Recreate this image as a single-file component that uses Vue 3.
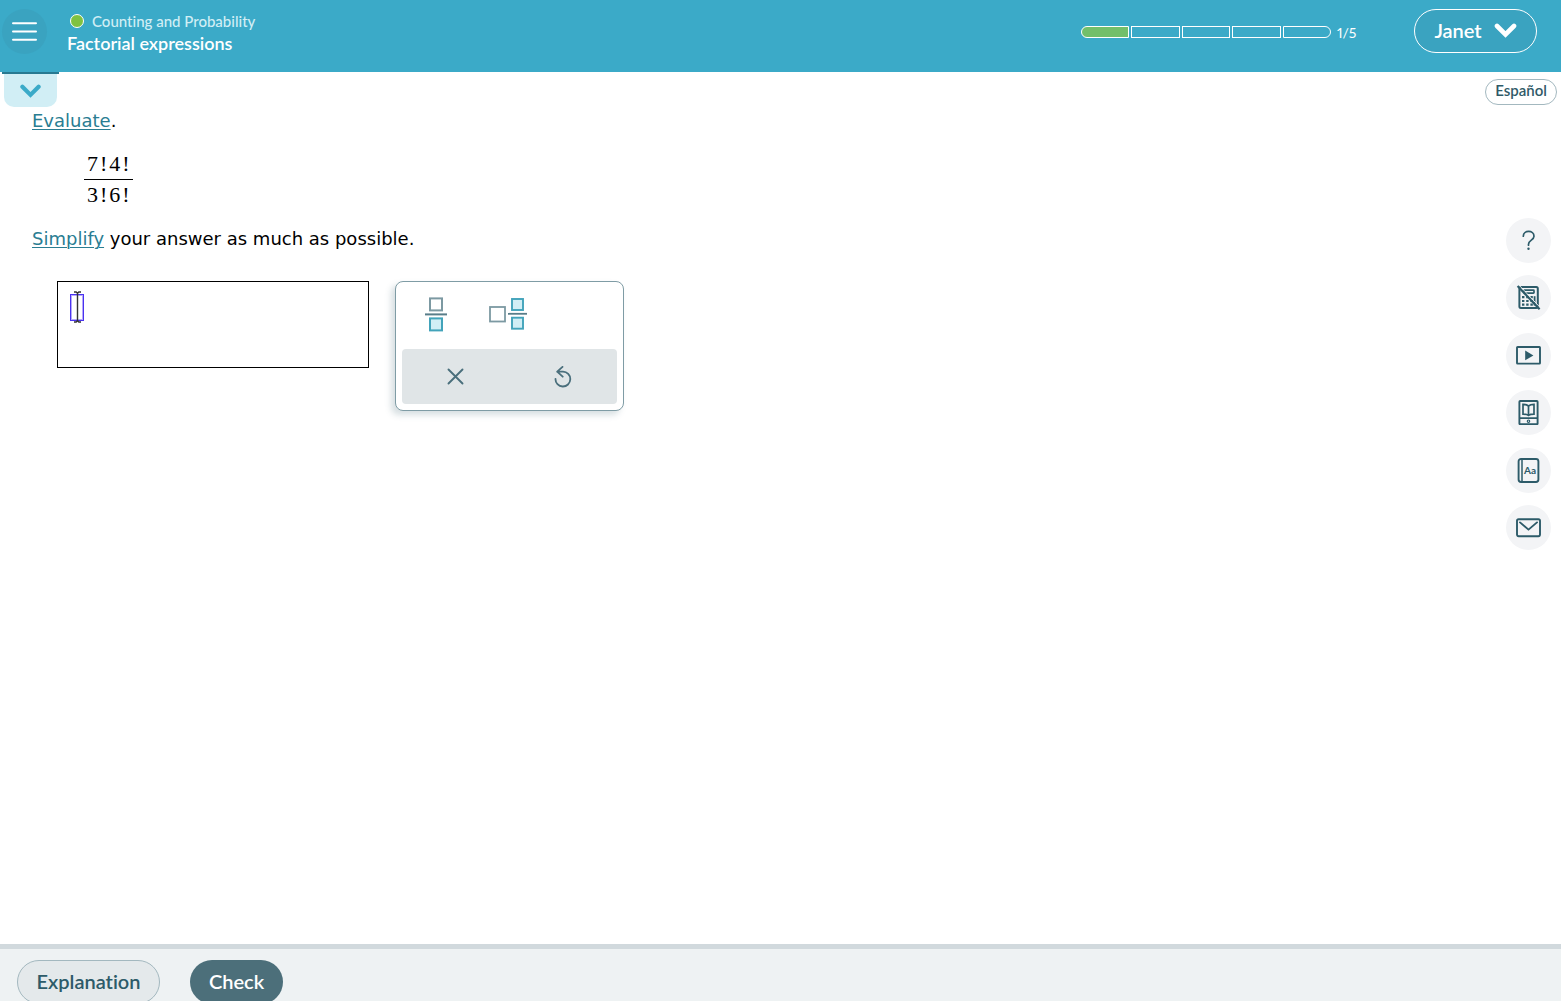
<!-- src/App.vue -->
<template>
  <div class="page">
    <header class="topbar">
      <button class="menu-btn" type="button" aria-label="Menu">
        <svg width="25" height="19" viewBox="0 0 25 19">
          <path d="M1 1.2H24M1 9.5H24M1 17.8H24" stroke="#fff" stroke-width="2" stroke-linecap="round" />
        </svg>
      </button>

      <div class="titles">
        <div class="topic"><span class="topic-dot"></span>Counting and Probability</div>
        <h1 class="lesson">Factorial expressions</h1>
      </div>

      <div class="progress">
        <div class="segments">
          <span
            v-for="n in total"
            :key="n"
            class="segment"
            :class="{ done: n <= completed }"
          ></span>
        </div>
        <span class="count">{{ completed }}/{{ total }}</span>
      </div>

      <button class="user-btn" type="button">
        Janet
        <svg width="23" height="15" viewBox="0 0 23 15">
          <path d="M3 3L11.5 11.5L20 3" fill="none" stroke="#fff" stroke-width="4.6" stroke-linecap="round" />
        </svg>
      </button>
    </header>

    <div class="subbar">
      <div class="tab-wrap">
        <button class="tab" type="button" aria-label="Expand">
          <svg width="21" height="14" viewBox="0 0 21 14">
            <path d="M2.4 2.8L10.5 10.9L18.6 2.8" fill="none" stroke="#3baac8" stroke-width="4.2" stroke-linecap="round" />
          </svg>
        </button>
      </div>
      <button class="lang-btn" type="button">Español</button>
    </div>

    <main class="content">
      <section class="problem">
        <p class="line"><a href="#evaluate">Evaluate</a>.</p>

        <div class="fraction">
          <div class="term top">
            <span v-for="(c, i) in numerator" :key="i">{{ c }}</span>
          </div>
          <div class="term">
            <span v-for="(c, i) in denominator" :key="i">{{ c }}</span>
          </div>
        </div>

        <p class="line"><a href="#simplify">Simplify</a> your answer as much as possible.</p>

        <div class="work">
          <div class="answer">
            <div class="slot">
              <input v-model="answer" class="slot-input" type="text" aria-label="Answer" />
              <svg class="ibeam" width="9" height="32" viewBox="0 0 9 32">
                <path d="M1 1H3.2L4.5 2.2L5.8 1H8M1 31H3.2L4.5 29.8L5.8 31H8M4.5 2V30" fill="none" stroke="#333" stroke-width="1.4" />
              </svg>
            </div>
          </div>

          <div class="keypad">
            <div class="keys">
              <button class="key" type="button" aria-label="Fraction">
                <svg width="22" height="36" viewBox="0 0 22 36">
                  <rect x="5" y="2.4" width="12" height="12" fill="#fff" stroke="#7c99a2" stroke-width="2" />
                  <path d="M0 18.4H22" stroke="#587d89" stroke-width="2" />
                  <rect x="5" y="22.4" width="12" height="12" fill="#d1eef5" stroke="#42a3ba" stroke-width="2" />
                </svg>
              </button>
              <button class="key" type="button" aria-label="Mixed number">
                <svg width="38" height="36" viewBox="0 0 38 36">
                  <rect x="1" y="11" width="15" height="14.5" fill="#fff" stroke="#7c99a2" stroke-width="1.8" />
                  <path d="M19 17.8H38" stroke="#587d89" stroke-width="1.8" />
                  <rect x="23" y="3" width="11" height="11" fill="#d1eef5" stroke="#42a3ba" stroke-width="1.9" />
                  <rect x="23" y="21.7" width="11" height="11" fill="#d1eef5" stroke="#42a3ba" stroke-width="1.9" />
                </svg>
              </button>
            </div>
            <div class="actions">
              <button class="action" type="button" aria-label="Clear" @click="answer = ''">
                <svg width="17" height="17" viewBox="0 0 17 17">
                  <path d="M1.5 1.5L15.5 15.5M15.5 1.5L1.5 15.5" stroke="#4a6f7c" stroke-width="1.9" stroke-linecap="round" />
                </svg>
              </button>
              <button class="action" type="button" aria-label="Undo">
                <svg width="18" height="22" viewBox="0 0 18 22">
                  <path d="M1.5 12.8A7.4 7.4 0 1 0 9 5.7H3.2M8.5 0.9L3.2 5.7L8.7 10.7" fill="none" stroke="#4a6f7c" stroke-width="1.8" stroke-linecap="round" stroke-linejoin="round" />
                </svg>
              </button>
            </div>
          </div>
        </div>
      </section>

      <aside class="tools">
        <button class="tool" type="button" aria-label="Help">
          <svg width="25" height="25" viewBox="0 0 25 25">
            <path d="M7.3 8.2C7.3 1.8 18 1.8 18 8.2C18 12 12.5 12.2 12.5 16.2V17.2" stroke-width="1.7" stroke-linecap="round" />
            <circle cx="12.5" cy="20.8" r="1.2" class="solid" />
          </svg>
        </button>
        <button class="tool" type="button" aria-label="Calculator not available">
          <svg width="25" height="25" viewBox="0 0 25 25">
            <rect x="3.4" y="2" width="18.4" height="21" rx="1.5" stroke-width="2" />
            <rect x="8" y="5.2" width="10" height="3" rx="0.6" stroke-width="1.7" />
            <path d="M6 12.2H8.4M10.2 12.2H12.6M14.4 12.2H16.8M6 16H8.4M10.2 16H12.6M14.4 16H16.8M6 19.6H8.4M10.2 19.6H12.6M14.4 19.6H16.8" stroke-width="2.2" />
            <path d="M18.6 11.2V20.5" stroke-width="1.8" />
            <path d="M3.2 0.4L25 23.4" stroke="#f3f4f6" stroke-width="1" />
            <path d="M1.6 1L23.6 24.2" stroke-width="2.2" />
          </svg>
        </button>
        <button class="tool" type="button" aria-label="Video">
          <svg width="25" height="25" viewBox="0 0 25 25">
            <rect x="1" y="4" width="23" height="16.6" rx="0.6" stroke-width="1.9" />
            <path d="M9.2 7.6V17.2L17.4 12.4Z" class="solid" />
          </svg>
        </button>
        <button class="tool" type="button" aria-label="eBook">
          <svg width="25" height="25" viewBox="0 0 25 25">
            <rect x="3.4" y="1" width="18.2" height="23.2" rx="0.8" stroke-width="1.9" />
            <path d="M3.4 18.2H21.6M12.5 6V15M7 4.4C9 4.4 11.1 4.8 12.5 6C13.9 4.8 16 4.4 18 4.4V14.2C16 14.2 13.9 14.4 12.5 15.4C11.1 14.4 9 14.2 7 14.2Z" stroke-width="1.7" />
            <circle cx="12.5" cy="21.2" r="1.2" stroke-width="1.2" />
          </svg>
        </button>
        <button class="tool" type="button" aria-label="Dictionary">
          <svg width="25" height="25" viewBox="0 0 25 25">
            <rect x="2.6" y="1" width="19.8" height="23" rx="2.4" stroke-width="1.9" />
            <path d="M6 1.2V23.8" stroke-width="1.5" />
            <text x="8" y="16" class="aa">Aa</text>
          </svg>
        </button>
        <button class="tool" type="button" aria-label="Message">
          <svg width="25" height="25" viewBox="0 0 25 25">
            <rect x="1" y="4.2" width="23" height="17" rx="1.6" stroke-width="1.9" />
            <path d="M4 7.4L12.5 14.6L21 7.4" stroke-width="1.9" stroke-linecap="round" />
          </svg>
        </button>
      </aside>
    </main>

    <footer class="bottombar">
      <button class="pill explanation" type="button">Explanation</button>
      <button class="pill check" type="button">Check</button>
    </footer>
  </div>
</template>

<script setup>
import { ref } from "vue";

const total = 5;
const completed = ref(1);
const answer = ref("");

const numerator = ["7", "!", "4", "!"];
const denominator = ["3", "!", "6", "!"];
</script>

<style>
body {
  margin: 0;
  background: #fff;
}
</style>

<style scoped>
.page {
  display: flex;
  flex-direction: column;
  height: 100vh;
  overflow: hidden;
  font-family: "Lato", "Liberation Sans", sans-serif;
  font-variant-ligatures: none;
}

button {
  display: flex;
  align-items: center;
  justify-content: center;
  box-sizing: border-box;
  padding: 0;
  border: none;
  background: none;
  font-family: inherit;
  font-variant-ligatures: inherit;
  cursor: pointer;
}

/* Header */
.topbar {
  display: flex;
  align-items: flex-start;
  flex: 0 0 72px;
  box-sizing: border-box;
  padding: 9px 24px 0 2px;
  background: #3baac8;
  color: #fff;
}

.menu-btn {
  width: 45px;
  height: 45px;
  border-radius: 50%;
  background: #3aa3c0;
}

.titles {
  flex: 1;
  margin-left: 20px;
}

.topic {
  display: flex;
  align-items: center;
  gap: 8px;
  padding-left: 3px;
  font-size: 15px;
  font-weight: 500;
  line-height: 24px;
  color: #d1eef5;
}

.topic-dot {
  box-sizing: border-box;
  width: 14px;
  height: 14px;
  border: 1px solid #fff;
  border-radius: 50%;
  background: #7fc241;
}

.lesson {
  margin: 0;
  font-size: 18px;
  font-weight: 600;
  line-height: 20px;
}

.progress {
  display: flex;
  align-items: center;
  gap: 6px;
  height: 46px;
  width: 333px;
}

.segments {
  display: flex;
  gap: 2px;
  width: 250px;
}

.segment {
  flex: 1;
  box-sizing: border-box;
  height: 12px;
  border: 1px solid #fff;
}

.segment:first-child {
  border-radius: 6px 0 0 6px;
}

.segment:last-child {
  border-radius: 0 6px 6px 0;
}

.segment.done {
  background: #72bf6a;
}

.count {
  font-size: 14px;
  font-variant-numeric: proportional-nums;
}

.user-btn {
  gap: 12px;
  width: 123px;
  height: 44px;
  padding-bottom: 2px;
  border: 1px solid #fff;
  border-radius: 22px;
  background: #3aa3c0;
  color: #fff;
  font-size: 20px;
  font-weight: 600;
}

/* Row under the header */
.subbar {
  display: flex;
  justify-content: space-between;
  align-items: flex-start;
  padding: 0 4px 0 2px;
}

.tab-wrap {
  padding: 0 2px;
  border-top: 2px solid #287991;
}

.tab {
  width: 53px;
  height: 33px;
  border-radius: 0 0 10px 10px;
  background: #d1eef5;
}

.lang-btn {
  width: 72px;
  height: 26px;
  margin-top: 7px;
  padding-bottom: 4px;
  border: 1px solid #a3b8bf;
  border-radius: 13px;
  color: #2f5a68;
  font-size: 15px;
  font-weight: 600;
}

/* Problem */
.content {
  display: flex;
  flex: 1;
  min-height: 0;
  padding: 0 10px 0 32px;
}

.problem {
  flex: 1;
}

.line {
  margin: 0;
  font-family: Verdana, "DejaVu Sans", sans-serif;
  font-size: 18px;
  line-height: 28px;
  color: #000;
}

.line a {
  color: #2a7d92;
  text-decoration-thickness: 1px;
  text-underline-offset: 2px;
}

.fraction {
  width: 49px;
  margin: 14px 0 15px 52px;
  font-family: "Liberation Serif", serif;
  font-size: 22px;
  line-height: 30px;
  color: #000;
}

.term {
  display: flex;
  gap: 2px;
  padding-left: 3px;
}

.term.top {
  border-bottom: 1px solid #000;
}

.work {
  display: flex;
  align-items: flex-start;
  gap: 26px;
  margin: 28px 0 0 25px;
}

.answer {
  box-sizing: border-box;
  width: 312px;
  height: 87px;
  padding: 12px;
  border: 1px solid #000;
}

.slot {
  position: relative;
  width: 14px;
  height: 27px;
}

.slot-input {
  display: block;
  box-sizing: border-box;
  width: 14px;
  height: 27px;
  padding: 0;
  border: 1px solid #4a32f0;
  outline: 1px solid #b5a9fa;
  outline-offset: -2px;
  background: transparent;
}

.ibeam {
  position: absolute;
  top: -3px;
  left: 3px;
  pointer-events: none;
}

.keypad {
  box-sizing: border-box;
  width: 229px;
  height: 130px;
  padding: 0 6px 6px;
  border: 1px solid #7f9ca5;
  border-radius: 8px;
  background: #fff;
  box-shadow: -4px 4px 6px rgba(74, 111, 124, 0.22);
}

.keys {
  display: flex;
  align-items: center;
  gap: 42px;
  height: 63px;
  padding: 0 0 4px 23px;
}

.actions {
  display: flex;
  height: 55px;
  border-radius: 4px;
  background: #e0e5e7;
}

.action {
  flex: 1;
}

/* Side tools */
.tools {
  display: flex;
  flex-direction: column;
  justify-content: space-between;
  height: 332px;
  margin-top: 111px;
}

.tool {
  width: 45px;
  height: 45px;
  border-radius: 50%;
  background: #f3f4f6;
}

.tool svg {
  fill: none;
  stroke: #2d5b69;
}

.tool .solid {
  fill: #2d5b69;
  stroke: none;
}

.tool .aa {
  fill: #2d5b69;
  stroke: none;
  font-size: 10px;
  font-weight: 700;
}

/* Footer */
.bottombar {
  display: flex;
  align-items: flex-start;
  flex: 0 0 57px;
  gap: 30px;
  box-sizing: border-box;
  height: 57px;
  min-height: 0;
  padding: 11px 17px 0;
  border-top: 5px solid #d1d9dd;
  background: #eef2f3;
}

.pill {
  flex: none;
  height: 44px;
  padding-bottom: 2px;
  border-radius: 22px;
  font-size: 20px;
  font-weight: 600;
}

.explanation {
  width: 143px;
  border: 1px solid #a3b8bf;
  background: #e4e9eb;
  color: #2d5b69;
}

.check {
  width: 93px;
  background: #4c6f7a;
  color: #fff;
}
</style>
